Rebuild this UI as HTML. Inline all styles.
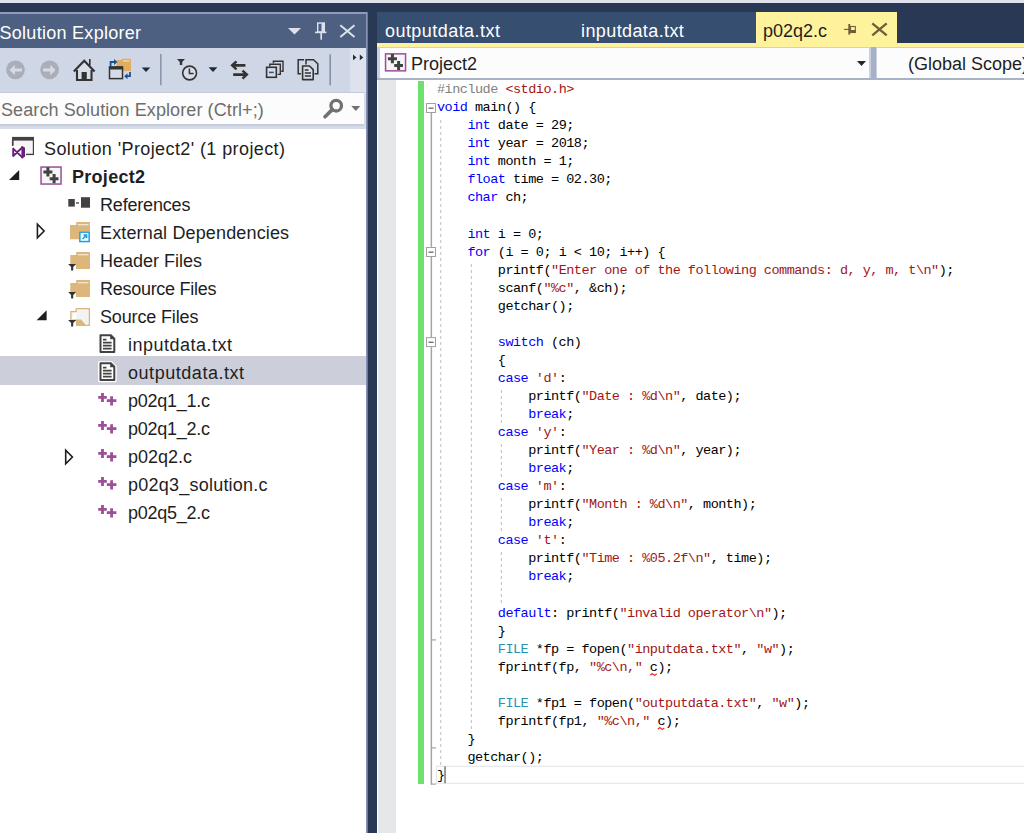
<!DOCTYPE html>
<html><head><meta charset="utf-8">
<style>
*{margin:0;padding:0;box-sizing:border-box}
html,body{width:1024px;height:833px;overflow:hidden;background:#293955;font-family:"Liberation Sans",sans-serif;}
.a{position:absolute}
.t{position:absolute;white-space:pre;font-size:18px;line-height:20px;color:#1e1e1e}
#topstrip{left:0;top:0;width:1024px;height:3px;background:#e0e3ec}
/* solution explorer */
#se{left:0;top:12px;width:367px;height:821px;background:#fff}
#se-title{left:0;top:12px;width:366px;height:36px;background:#4d6082}
#se-tb{left:0;top:48px;width:366px;height:44px;background:#cfd6e5}
#se-ovf{left:350px;top:48px;width:16px;height:44px;background:#dde2ec}
#se-search{left:0;top:92px;width:366px;height:37px;background:#d5dbe8}
#se-sbox{left:0;top:92px;width:364px;height:34px;background:#fcfcfc;border-top:1px solid #c3cad9;border-bottom:2px solid #c6cdda}
.sel{left:0;width:366px;height:29px;background:#ccceda}
/* editor */
#tabwell{left:377px;top:12px;width:379px;height:31px;background:#364e6f}
#acttab{left:756px;top:12px;width:141px;height:35px;background:#fff29d}
#docstrip{left:377px;top:43px;width:647px;height:4px;background:#fff29d}
#navbar{left:377px;top:47px;width:647px;height:33px;background:#c9d0e1}
#nav1{left:380px;top:48px;width:489px;height:30px;background:#fcfcfc}
#navsep{left:871px;top:47px;width:5px;height:31px;background:#a6b1c6}
#navbot{left:377px;top:78px;width:647px;height:2px;background:#a9b3c6}
#nav2{left:877px;top:48px;width:147px;height:30px;background:#fcfcfc}
#editor{left:377px;top:80px;width:647px;height:753px;background:#fff}
#margin{left:378px;top:80px;width:18px;height:753px;background:#e6e7e8}
#green{left:418px;top:81px;width:6px;height:703px;background:#6ce26c}
#code{left:437px;top:81.2px;font-family:"Liberation Mono",monospace;font-size:13.5px;letter-spacing:-0.50px;line-height:18.04px;white-space:pre;color:#000}
.k{color:#0000ff}.s{color:#a31515}.p{color:#808080}.ty{color:#2b91af}
</style></head><body>
<div class="a" id="topstrip"></div>
<div class="a" id="se"></div>
<div class="a" id="se-title"></div>
<div class="t" style="left:-0.5px;top:22.7px;color:#fff;letter-spacing:0.28px">Solution Explorer</div>
<div class="a" id="se-tb"></div>
<div class="a" id="se-ovf"></div>
<div class="a" id="se-search"></div>
<div class="a" id="se-sbox"></div>
<div class="t" style="left:1px;top:100px;color:#6d6d6d;letter-spacing:0.1px">Search Solution Explorer (Ctrl+;)</div>
<div class="a sel" style="top:356px"></div>
<div class="t" style="left:44px;top:139px;letter-spacing:0.4px">Solution 'Project2' (1 project)</div>
<div class="t" style="left:72px;top:167px;font-weight:bold;letter-spacing:0.28px">Project2</div>
<div class="t" style="left:100px;top:195px;letter-spacing:-0.18px">References</div>
<div class="t" style="left:100px;top:223px;letter-spacing:0.15px">External Dependencies</div>
<div class="t" style="left:100px;top:251px">Header Files</div>
<div class="t" style="left:100px;top:279px;letter-spacing:-0.28px">Resource Files</div>
<div class="t" style="left:100px;top:307px;letter-spacing:-0.15px">Source Files</div>
<div class="t" style="left:128px;top:335px;letter-spacing:0.5px">inputdata.txt</div>
<div class="t" style="left:128px;top:363px;letter-spacing:0.54px">outputdata.txt</div>
<div class="t" style="left:128px;top:391px;letter-spacing:-0.25px">p02q1_1.c</div>
<div class="t" style="left:128px;top:419px;letter-spacing:-0.25px">p02q1_2.c</div>
<div class="t" style="left:128px;top:447px">p02q2.c</div>
<div class="t" style="left:128px;top:475px;letter-spacing:0.23px">p02q3_solution.c</div>
<div class="t" style="left:128px;top:503px;letter-spacing:-0.25px">p02q5_2.c</div>

<div class="a" id="tabwell"></div>
<div class="a" id="acttab"></div>
<div class="a" id="docstrip"></div>
<div class="t" style="left:385px;top:21px;color:#fff;letter-spacing:0.45px">outputdata.txt</div>
<div class="t" style="left:581px;top:21px;color:#fff;letter-spacing:0.4px">inputdata.txt</div>
<div class="t" style="left:763px;top:21px;color:#1e1e1e">p02q2.c</div>
<div class="a" id="navbar"></div>
<div class="a" id="nav1"></div>
<div class="a" id="nav2"></div>
<div class="a" id="navsep"></div>
<div class="a" id="navbot"></div>
<div class="t" style="left:411px;top:54px">Project2</div>
<div class="t" style="left:908px;top:54px">(Global Scope)</div>
<div class="a" id="editor"></div>
<div class="a" id="margin"></div>
<div class="a" id="green"></div>
<div class="a" id="code"><span class="p">#include</span> <span class="s">&lt;stdio.h&gt;</span>
<span class="k">void</span> main() {
    <span class="k">int</span> date = 29;
    <span class="k">int</span> year = 2018;
    <span class="k">int</span> month = 1;
    <span class="k">float</span> time = 02.30;
    <span class="k">char</span> ch;

    <span class="k">int</span> i = 0;
    <span class="k">for</span> (i = 0; i &lt; 10; i++) {
        printf(<span class="s">"Enter one of the following commands: d, y, m, t\n"</span>);
        scanf(<span class="s">"%c"</span>, &amp;ch);
        getchar();

        <span class="k">switch</span> (ch)
        {
        <span class="k">case</span> <span class="s">'d'</span>:
            printf(<span class="s">"Date : %d\n"</span>, date);
            <span class="k">break</span>;
        <span class="k">case</span> <span class="s">'y'</span>:
            printf(<span class="s">"Year : %d\n"</span>, year);
            <span class="k">break</span>;
        <span class="k">case</span> <span class="s">'m'</span>:
            printf(<span class="s">"Month : %d\n"</span>, month);
            <span class="k">break</span>;
        <span class="k">case</span> <span class="s">'t'</span>:
            printf(<span class="s">"Time : %05.2f\n"</span>, time);
            <span class="k">break</span>;

        <span class="k">default</span>: printf(<span class="s">"invalid operator\n"</span>);
        }
        <span class="ty">FILE</span> *fp = fopen(<span class="s">"inputdata.txt"</span>, <span class="s">"w"</span>);
        fprintf(fp, <span class="s">"%c\n,"</span> c);

        <span class="ty">FILE</span> *fp1 = fopen(<span class="s">"outputdata.txt"</span>, <span class="s">"w"</span>);
        fprintf(fp1, <span class="s">"%c\n,"</span> c);
    }
    getchar();
}</div>
<svg class="a" style="left:0;top:0" width="1024" height="833" viewBox="0 0 1024 833"><defs><pattern id="dash" x="0" y="0" width="2" height="6" patternUnits="userSpaceOnUse"><rect x="0" y="0" width="2" height="3" fill="#c8c8c8"/></pattern></defs><rect x="440.1" y="116.88" width="1.2" height="649.4399999999999" fill="url(#dash)"/><rect x="470.8" y="261.2" width="1.2" height="469.0399999999999" fill="url(#dash)"/><rect x="500.8" y="387.48" width="1.2" height="36.079999999999984" fill="url(#dash)"/><rect x="500.8" y="441.59999999999997" width="1.2" height="36.08000000000004" fill="url(#dash)"/><rect x="500.8" y="495.71999999999997" width="1.2" height="36.079999999999984" fill="url(#dash)"/><rect x="500.8" y="549.8399999999999" width="1.2" height="54.120000000000005" fill="url(#dash)"/><rect x="0" y="12" width="366" height="2" fill="#8f9cc0"/><rect x="366" y="12" width="1.7" height="821" fill="#8794b6"/><polygon points="288,28 301,28 294.5,34.5" fill="#dde1ea"/><rect x="317.7" y="23" width="6.6" height="9" fill="none" stroke="#dde1ea" stroke-width="1.4"/><rect x="321.5" y="23" width="2.8" height="9" fill="#dde1ea"/><rect x="315" y="31.6" width="11.4" height="1.6" fill="#dde1ea"/><rect x="320.4" y="33" width="1.6" height="6.7" fill="#dde1ea"/><path d="M340.3,25.3 L354.5,37 M354.5,25.3 L340.3,37" stroke="#dde1ea" stroke-width="2"/><circle cx="15.5" cy="69.8" r="9.4" fill="#a9aeb9"/><path d="M9.5,70 L14.8,64.8 L14.8,75.2 Z M14,68.4 H22 V71.6 H14 Z" fill="#d5dae5"/><circle cx="49.6" cy="69.8" r="9.4" fill="#a9aeb9"/><path d="M55.6,70 L50.3,64.8 L50.3,75.2 Z M51,68.4 H43 V71.6 H51 Z" fill="#d5dae5"/><path d="M76.8,70.5 V80 H91.7 V70.5 L84.2,62.5 Z" fill="#d9dde8"/><path d="M73.8,71.6 L84.2,60.8 L94.6,71.6 M77,70 V80 H91.5 V70" fill="none" stroke="#333" stroke-width="2.1"/><rect x="81.6" y="72" width="5.2" height="8" fill="#333"/><rect x="89" y="59" width="1.6" height="6.5" fill="#333"/><path d="M116.6,60 H121 L122.5,58.8 H131 V71 H116.6 Z" fill="#dfae5e"/><rect x="123" y="60.3" width="6.5" height="1.3" fill="#f2dcae"/><rect x="109.5" y="67" width="13" height="11.6" fill="#d6dbe6" stroke="#333" stroke-width="1.5"/><rect x="109" y="66.5" width="14" height="3" fill="#333"/><path d="M110.6,66.5 V62 H114.5" fill="none" stroke="#1c4f96" stroke-width="1.8"/><polygon points="114,59 117.4,62 114,65" fill="#1c4f96"/><path d="M130,72 V76.2 H126.5" fill="none" stroke="#1c4f96" stroke-width="1.8"/><polygon points="127.5,73.2 124.2,76.2 127.5,79.2" fill="#1c4f96"/><polygon points="141.8,67.6 150.3,67.6 146,72" fill="#1c2a44"/><rect x="160" y="54" width="1.6" height="31.2" fill="#8c97ad"/><polygon points="177,59 185,59 182.2,62 182.2,65 179.8,65 179.8,62" fill="#333"/><circle cx="189.6" cy="73" r="6.9" fill="#d9dde8" stroke="#333" stroke-width="1.6"/><path d="M189.4,68.6 V73.6 H193.6" fill="none" stroke="#333" stroke-width="1.5"/><polygon points="208.6,67.2 217.4,67.2 213,72" fill="#1c2a44"/><path d="M245.4,65.3 H233.5 M233.2,74.6 H245.5" stroke="#333" stroke-width="2.8"/><path d="M236.5,61.3 L232.2,65.3 L236.5,69.3 M242.5,70.6 L246.8,74.6 L242.5,78.6" fill="none" stroke="#333" stroke-width="2.5"/><path d="M269.8,66.4 V64.2 H280.3 V74.4 H277.6" fill="none" stroke="#333" stroke-width="1.4"/><path d="M273.4,63.2 V61.2 H283 V71.2 H281.2" fill="none" stroke="#333" stroke-width="1.4"/><rect x="266.6" y="67.3" width="9.7" height="10" fill="#d9dde8" stroke="#333" stroke-width="1.6"/><rect x="269" y="71.6" width="4.8" height="1.6" fill="#1e5aa0"/><path d="M304,59.8 H298.2 V73.8 H301" fill="none" stroke="#333" stroke-width="1.5"/><path d="M306,64.5 V59.8 H313.5 L317.8,63.8 V73.8 H314.5" fill="none" stroke="#333" stroke-width="1.5"/><path d="M302.6,66 H309.5 L313.2,69.6 V79.6 H302.6 Z" fill="#d9dde8" stroke="#333" stroke-width="1.6" stroke-linejoin="round"/><path d="M304.8,70 H308.5 M304.8,73 H311 M304.8,76 H311" stroke="#333" stroke-width="1.3"/><rect x="329.4" y="54.3" width="1.6" height="31" fill="#8591a8"/><polygon points="353,54.5 356.5,57.4 353,60.3" fill="#1c2a44"/><polygon points="359.8,54.5 363.3,57.4 359.8,60.3" fill="#1c2a44"/><circle cx="336.2" cy="105.7" r="5.3" fill="none" stroke="#717171" stroke-width="3.3"/><path d="M332.5,109.4 L325,116.8" stroke="#717171" stroke-width="3.6" stroke-linecap="round"/><polygon points="351.3,106 360.3,106 355.8,111" fill="#717171"/><rect x="12.8" y="137.5" width="20.6" height="17" fill="#f5f5f5" stroke="#424242" stroke-width="1.2"/><rect x="12.2" y="137" width="21.8" height="3.6" fill="#424242"/><rect x="10" y="145.5" width="16" height="15" fill="#fff"/><path d="M12.6,140 V146" stroke="#424242" stroke-width="1.4"/><path d="M26.6,154.4 H33.4" stroke="#424242" stroke-width="1.2"/><path d="M13.2,148.6 V156 M13.2,148.6 L22.5,157.6 M13.2,156 L22.5,147.2" fill="none" stroke="#68217a" stroke-width="1.9" stroke-linecap="round"/><path d="M21.4,146 L25,147.6 V156.8 L21.4,158.3 Z" fill="#68217a"/><polygon points="19.2,170 19.2,180 9,180" fill="#1e1e1e"/><rect x="41.05" y="167.05" width="20" height="17" fill="#f6f6f6" stroke="#9b4f96" stroke-width="1.5"/><path d="M43.4,171.9 H52.4 M47.9,167.3 V176.4 M49.699999999999996,178.70000000000002 H58.5 M54.099999999999994,174.10000000000002 V183.3" stroke="#424242" stroke-width="3"/><rect x="68.3" y="199" width="6.5" height="7.6" fill="#424242"/><rect x="76" y="202.3" width="3" height="1.3" fill="#424242"/><rect x="81" y="197.2" width="9" height="10.5" fill="#424242"/><polygon points="37.4,224.2 37.4,237.8 44.1,231" fill="none" stroke="#1e1e1e" stroke-width="1.6" stroke-linejoin="miter"/><path d="M76.2,222 H90 V239.2 H70 V225 H76.2 Z" fill="#dcb67a"/><rect x="78" y="224" width="10.5" height="1.3" fill="#f4e6cc"/><rect x="79.1" y="231.4" width="10.8" height="10.9" fill="#fff"/><rect x="79.85" y="232.15" width="9.3" height="9.4" fill="#fff" stroke="#1ba1e2" stroke-width="1.5"/><path d="M82.6,239 L86.2,235.4 M83.5,235 H86.6 V238.2" fill="none" stroke="#1ba1e2" stroke-width="1.6"/><path d="M76.2,252 H90 V269 H76 V264 H70.3 V255 H76.2 Z" fill="#dcb67a"/><rect x="78" y="254" width="10.5" height="1.3" fill="#f4e6cc"/><polygon points="68.1,264 76.2,264 73.2,267 73.2,270.4 71.1,270.4 71.1,267" fill="#333"/><path d="M76.2,280 H90 V297 H76 V292 H70.3 V283 H76.2 Z" fill="#dcb67a"/><rect x="78" y="282" width="10.5" height="1.3" fill="#f4e6cc"/><polygon points="68.1,292 76.2,292 73.2,295 73.2,298.4 71.1,298.4 71.1,295" fill="#333"/><path d="M76.2,308.6 H89.4 V325.4 H76 M70.9,320 V311.6 H76.2 V308.6" fill="#f3f3f3" stroke="#dcb67a" stroke-width="1.3"/><path d="M70.3,319.5 H81 L86.5,325.8 H76 V321 Z" fill="#dcb67a"/><polygon points="68.1,320 76.2,320 73.2,323 73.2,326.4 71.1,326.4 71.1,323" fill="#333"/><polygon points="46.6,310.3 46.6,320.3 36.6,320.3" fill="#1e1e1e"/><path d="M100.5,335.3 H110.8 L114.3,338.8 V351.90000000000003 H100.5 Z" fill="#fff" stroke="#424242" stroke-width="2" stroke-linejoin="round"/><polygon points="110.2,334.8 114.8,339.3 110.2,339.3" fill="#424242"/><path d="M103,339.6 H106.5 M103,342.6 H111.6 M103,345.6 H111.6 M103,348.6 H111.6" stroke="#424242" stroke-width="1.6"/><path d="M99.2,362.3 H111.4 L115.6,366.5 V381.2 H99.2 Z" fill="#fff" stroke="#fff" stroke-width="2.2" stroke-linejoin="round"/><path d="M100.5,363.3 H110.8 L114.3,366.8 V379.90000000000003 H100.5 Z" fill="#fff" stroke="#424242" stroke-width="2" stroke-linejoin="round"/><polygon points="110.2,362.8 114.8,367.3 110.2,367.3" fill="#424242"/><path d="M103,367.6 H106.5 M103,370.6 H111.6 M103,373.6 H111.6 M103,376.6 H111.6" stroke="#424242" stroke-width="1.6"/><path d="M98.2,397.3 H106.8 M102.5,393 V402 M106.8,400.6 H116.4 M111.6,396.3 V405.5" stroke="#9b4f96" stroke-width="2.8"/><path d="M98.2,425.3 H106.8 M102.5,421 V430 M106.8,428.6 H116.4 M111.6,424.3 V433.5" stroke="#9b4f96" stroke-width="2.8"/><path d="M98.2,453.3 H106.8 M102.5,449 V458 M106.8,456.6 H116.4 M111.6,452.3 V461.5" stroke="#9b4f96" stroke-width="2.8"/><path d="M98.2,481.3 H106.8 M102.5,477 V486 M106.8,484.6 H116.4 M111.6,480.3 V489.5" stroke="#9b4f96" stroke-width="2.8"/><path d="M98.2,509.3 H106.8 M102.5,505 V514 M106.8,512.6 H116.4 M111.6,508.3 V517.5" stroke="#9b4f96" stroke-width="2.8"/><polygon points="65.7,450.2 65.7,463.8 72.39999999999999,457" fill="none" stroke="#1e1e1e" stroke-width="1.6" stroke-linejoin="miter"/><path d="M843.9,29.4 H849" stroke="#6f5e3a" stroke-width="1.1"/><rect x="848.3" y="24" width="1.9" height="10.6" fill="#6f5e3a"/><rect x="850.5" y="26.5" width="4.8" height="6" fill="none" stroke="#6f5e3a" stroke-width="1.1"/><rect x="850" y="30" width="5.8" height="2.8" fill="#6f5e3a"/><path d="M872.3,23.3 L886.7,35.4 M886.7,23.3 L872.3,35.4" stroke="#6f5e3a" stroke-width="2.3"/><rect x="385.55" y="53.85" width="20" height="17" fill="#f6f6f6" stroke="#9b4f96" stroke-width="1.5"/><path d="M387.90000000000003,58.7 H396.90000000000003 M392.40000000000003,54.1 V63.2 M394.2,65.5 H403.0 M398.6,60.9 V70.1" stroke="#424242" stroke-width="3"/><polygon points="857,61 866,61 861.5,66" fill="#1e2535"/><rect x="430.6" y="112.8" width="1.5" height="134" fill="#a5a5a5"/><rect x="430.6" y="257" width="1.5" height="82" fill="#a5a5a5"/><rect x="430.6" y="347.2" width="1.5" height="437.4" fill="#a5a5a5"/><rect x="426.5" y="103.5" width="9" height="9" fill="#fff" stroke="#a0a0a0" stroke-width="1"/><rect x="428.5" y="107.5" width="5" height="1.4" fill="#707070"/><rect x="426.5" y="247.5" width="9" height="9" fill="#fff" stroke="#a0a0a0" stroke-width="1"/><rect x="428.5" y="251.5" width="5" height="1.4" fill="#707070"/><rect x="426.5" y="337.6" width="9" height="9" fill="#fff" stroke="#a0a0a0" stroke-width="1"/><rect x="428.5" y="341.6" width="5" height="1.4" fill="#707070"/><rect x="431" y="639.3" width="5" height="1.2" fill="#a5a5a5"/><rect x="431" y="747.3" width="5" height="1.2" fill="#a5a5a5"/><rect x="431" y="783.5" width="5" height="1.2" fill="#a5a5a5"/><rect x="436.5" y="766.3" width="600" height="17" fill="none" stroke="#e6e6ee" stroke-width="1.2"/><rect x="444.2" y="766.3" width="1.7" height="17" fill="#8a8a8a"/><path d="M650.2,675.2 L652.2,673.5 L654.7,675.4 L656.7,673.8" fill="none" stroke="#ff2a2a" stroke-width="1.3"/><path d="M657.8,729.3000000000001 L659.8,727.6 L662.3,729.5 L664.3,727.9" fill="none" stroke="#ff2a2a" stroke-width="1.3"/></svg>
</body></html>
